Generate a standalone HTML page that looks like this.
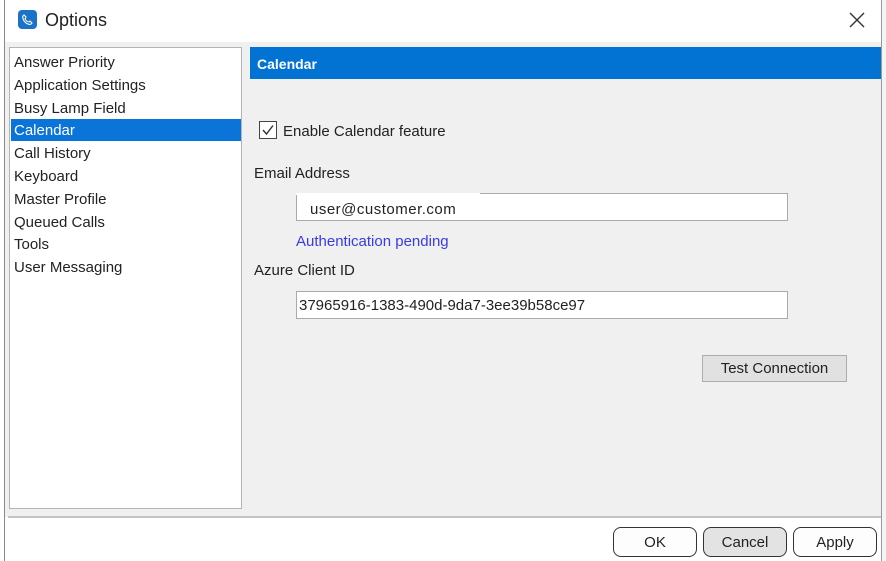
<!DOCTYPE html>
<html><head><style>
body{margin:0;width:886px;height:561px;background:#fff;position:relative;overflow:hidden;font-family:"Liberation Sans",sans-serif;color:#222}
.a{position:absolute}
.t{font-size:15px;white-space:nowrap}
</style></head><body>
<div class="a" style="left:4px;top:0;width:1px;height:561px;background:#8a8a8a"></div>
<div class="a" style="left:881px;top:0;width:1px;height:561px;background:#9a9a9a"></div>
<div class="a" style="left:882px;top:0;width:4px;height:561px;background:#f4f4f4"></div>
<!-- title -->
<div class="a" style="left:18px;top:10px;width:19px;height:19px;border-radius:4px;background:#1a73c9"></div>
<svg class="a" style="left:21px;top:13px" width="13" height="13" viewBox="0 0 13 13"><path d="M3 2 L5 4 L4 6 Q6 9 8 9 L9 8 L11 10 L9.5 11.5 Q6 11.5 3.5 8.5 Q1.5 6 1.8 3.2 Z" fill="none" stroke="#fff" stroke-width="1.1"/></svg>
<div class="a" style="left:45px;top:10px;font-size:18px">Options</div>
<svg class="a" style="left:849px;top:12px" width="16" height="16"><path d="M1 1L15 15M15 1L1 15" stroke="#333" stroke-width="1.4"/></svg>
<!-- body -->
<div class="a" style="left:5px;top:42px;width:876px;height:475px;background:#f0f0f0"></div>
<div class="a" style="left:8px;top:516px;width:873px;height:2px;background:#c4c4c4"></div>
<!-- list -->
<div class="a" style="left:9px;top:47px;width:231px;height:460px;background:#fff;border:1px solid #b4b4b4"></div>
<div class="a" style="left:11px;top:119px;width:230px;height:22px;background:#0a74d8"></div>
<div class="a t" style="left:14px;top:52px;line-height:22.8px">Answer Priority<br>Application Settings<br>Busy Lamp Field<br><span style="color:#fff">Calendar</span><br>Call History<br>Keyboard<br>Master Profile<br>Queued Calls<br>Tools<br>User Messaging</div>
<!-- header -->
<div class="a" style="left:250px;top:47px;width:631px;height:32px;background:#0373d3"></div>
<div class="a" style="left:257px;top:56px;color:#fff;font-weight:bold;font-size:14px">Calendar</div>
<!-- checkbox -->
<div class="a" style="left:259px;top:121px;width:16px;height:16px;border:1px solid #444;background:#fff"></div>
<svg class="a" style="left:260px;top:122px" width="16" height="16"><path d="M3 8 L6.5 12 L13 3.5" fill="none" stroke="#333" stroke-width="1.4"/></svg>
<div class="a t" style="left:283px;top:123px">Enable Calendar feature</div>
<div class="a t" style="left:254px;top:165px">Email Address</div>
<div class="a" style="left:296px;top:193px;width:490px;height:26px;background:#fff;border:1px solid #aaa"></div>
<div class="a" style="left:296px;top:193px;width:184px;height:2px;background:#fff"></div>
<div class="a" style="left:310px;top:201px;font-size:15px;letter-spacing:0.5px">user@customer.com</div>
<div class="a t" style="left:296px;top:233px;color:#3a3ae8">Authentication pending</div>
<div class="a t" style="left:254px;top:262px">Azure Client ID</div>
<div class="a" style="left:296px;top:291px;width:490px;height:26px;background:#fff;border:1px solid #aaa"></div>
<div class="a t" style="left:299px;top:297px">37965916-1383-490d-9da7-3ee39b58ce97</div>
<div class="a" style="left:702px;top:355px;width:143px;height:25px;background:#e1e1e1;border:1px solid #adadad"></div>
<div class="a t" style="left:702px;top:360px;width:145px;text-align:center">Test Connection</div>
<!-- buttons -->
<div class="a t" style="left:613px;top:527px;width:82px;height:28px;border:1px solid #333;border-radius:8px;background:#fdfdfd;text-align:center;line-height:29px">OK</div>
<div class="a t" style="left:703px;top:527px;width:82px;height:28px;border:1px solid #333;border-radius:8px;background:#e3e3e3;text-align:center;line-height:29px">Cancel</div>
<div class="a t" style="left:793px;top:527px;width:82px;height:28px;border:1px solid #333;border-radius:8px;background:#fdfdfd;text-align:center;line-height:29px">Apply</div>
</body></html>
